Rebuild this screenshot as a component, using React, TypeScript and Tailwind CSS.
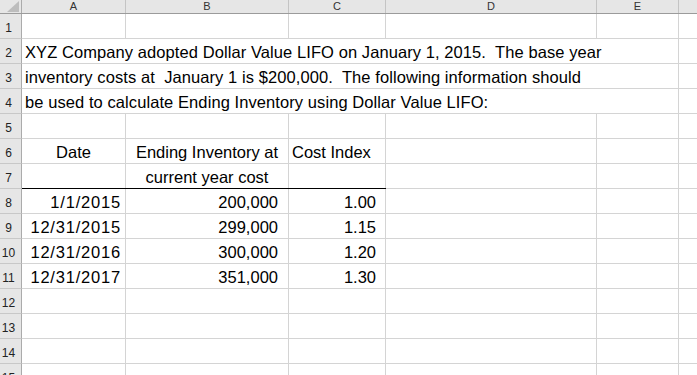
import React from "react"

const cols = [
  { key: "A", w: "w-[104px]" },
  { key: "B", w: "w-[163px]" },
  { key: "C", w: "w-[97px]" },
  { key: "D", w: "w-[211px]" },
  { key: "E", w: "w-[82px]" },
]

const font = "font-['Liberation_Sans',Arial,sans-serif]"

function RowHead({ n }: { n: number }) {
  return (
    <div className="w-[22px] shrink-0 h-full bg-[#e6e6e6] border-r border-[#ababab] border-b border-b-[#c8c8c8] flex items-end justify-center pr-[4px] pb-[4px] text-[12px] leading-none text-[#222]">
      {n}
    </div>
  )
}

function Row({ n, children, bottom = "border-[#d4d4d4]" }: { n: number; children?: React.ReactNode; bottom?: string }) {
  return (
    <div className="flex h-[25px] shrink-0">
      <RowHead n={n} />
      <div className={`flex flex-1 border-b ${bottom}`}>{children}</div>
    </div>
  )
}

function Cell({ w, children, align = "justify-start", last = false, className = "" }: { w: string; children?: React.ReactNode; align?: string; last?: boolean; className?: string }) {
  return (
    <div className={`${w} shrink-0 h-full ${last ? "" : "border-r border-[#d4d4d4]"} flex items-end pb-[3px] ${align} ${className} text-[16.5px] leading-none text-black whitespace-nowrap`}>
      {children}
    </div>
  )
}

function EmptyCells() {
  return (
    <>
      {cols.map((c) => (
        <Cell key={c.key} w={c.w} />
      ))}
      <Cell w="flex-1" last />
    </>
  )
}

const tableRows = [
  { n: 8, date: "1/1/2015", cost: "200,000", idx: "1.00" },
  { n: 9, date: "12/31/2015", cost: "299,000", idx: "1.15" },
  { n: 10, date: "12/31/2016", cost: "300,000", idx: "1.20" },
  { n: 11, date: "12/31/2017", cost: "351,000", idx: "1.30" },
]

const intro = [
  "XYZ Company adopted Dollar Value LIFO on January 1, 2015.  The base year",
  "inventory costs at  January 1 is $200,000.  The following information should",
  "be used to calculate Ending Inventory using Dollar Value LIFO:",
]

export default function App() {
  return (
    <div className={`w-[697px] h-[375px] overflow-hidden bg-white flex flex-col ${font}`}>
      {/* column headers */}
      <div className="flex h-[14px] shrink-0 bg-[#e6e6e6] border-b border-[#9b9b9b]">
        <div className="w-[22px] shrink-0 border-r border-[#ababab] relative">
          <svg className="absolute right-[2px] bottom-[1px]" width="12" height="11" viewBox="0 0 12 11">
            <polygon points="12,0 12,11 0,11" fill="#bdbdbd" />
          </svg>
        </div>
        {cols.map((c) => (
          <div key={c.key} className={`${c.w} shrink-0 border-r border-[#c4c4c4] flex items-center justify-center text-[11px] leading-none text-[#333]`}>
            {c.key}
          </div>
        ))}
        <div className="flex-1" />
      </div>

      <Row n={1}>
        <EmptyCells />
      </Row>

      {intro.map((line, i) => (
        <Row key={i} n={i + 2}>
          <Cell w="w-[657px]" className="pl-[3px] whitespace-pre tracking-[0.08px]">
            {line}
          </Cell>
          <Cell w="flex-1" last />
        </Row>
      ))}

      <Row n={5}>
        <EmptyCells />
      </Row>

      <Row n={6}>
        <Cell w="w-[104px]" align="justify-center">Date</Cell>
        <Cell w="w-[163px]" align="justify-center">Ending Inventory at</Cell>
        <Cell w="w-[97px]" className="pl-[3px]">Cost Index</Cell>
        <Cell w="w-[211px]" />
        <Cell w="w-[82px]" />
        <Cell w="flex-1" last />
      </Row>

      <div className="flex h-[25px] shrink-0">
        <RowHead n={7} />
        <div className="flex flex-1">
          <div className="flex border-b border-black">
            <Cell w="w-[104px]" />
            <Cell w="w-[163px]" align="justify-center">current year cost</Cell>
            <Cell w="w-[97px]" />
          </div>
          <div className="flex flex-1 border-b border-[#d4d4d4]">
            <Cell w="w-[211px]" />
            <Cell w="w-[82px]" />
            <Cell w="flex-1" last />
          </div>
        </div>
      </div>

      {tableRows.map((r) => (
        <Row key={r.n} n={r.n}>
          <Cell w="w-[104px]" align="justify-end" className="pr-[4px] tracking-[0.8px]">{r.date}</Cell>
          <Cell w="w-[163px]" align="justify-end" className="pr-[10px]">{r.cost}</Cell>
          <Cell w="w-[97px]" align="justify-end" className="pr-[9px]">{r.idx}</Cell>
          <Cell w="w-[211px]" />
          <Cell w="w-[82px]" />
          <Cell w="flex-1" last />
        </Row>
      ))}

      {[12, 13, 14, 15].map((n) => (
        <Row key={n} n={n}>
          <EmptyCells />
        </Row>
      ))}
    </div>
  )
}
